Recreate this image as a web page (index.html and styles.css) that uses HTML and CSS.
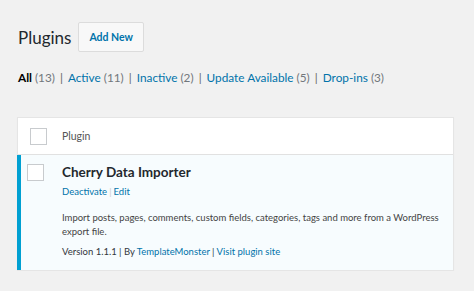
FILE: index.html
```html
<!DOCTYPE html>
<html lang="en">
<head>
    <meta charset="UTF-8">
    <title>Plugins</title>
    <link rel="stylesheet" href="styles.css">
</head>
<body>
    <div class="wrap">
        <div class="page-head">
            <h1>Plugins</h1>
            <a class="add-new" href="#">Add New</a>
        </div>

        <ul class="subsubsub">
            <li><a class="current" href="#">All <span class="count">(13)</span></a><span class="sep">|</span></li>
            <li><a href="#">Active <span class="count">(11)</span></a><span class="sep">|</span></li>
            <li><a href="#">Inactive <span class="count">(2)</span></a><span class="sep">|</span></li>
            <li><a href="#">Update Available <span class="count">(5)</span></a><span class="sep">|</span></li>
            <li><a href="#">Drop-ins <span class="count">(3)</span></a></li>
        </ul>

        <div class="plugins">
            <div class="head-row">
                <span class="check"></span>
                <span class="col-name">Plugin</span>
            </div>
            <div class="plugin-row active">
                <span class="check"></span>
                <div class="plugin-info">
                    <strong class="plugin-title">Cherry Data Importer</strong>
                    <div class="row-actions">
                        <a href="#">Deactivate</a><span class="bar">|</span><a href="#">Edit</a>
                    </div>
                    <p class="desc">Import posts, pages, comments, custom fields, categories, tags and more from a WordPress export file.</p>
                    <div class="meta">Version 1.1.1 | By <a href="#">TemplateMonster</a> | <a href="#">Visit plugin site</a></div>
                </div>
            </div>
        </div>
    </div>
</body>
</html>
```

FILE: styles.css
```css
body {
    margin: 0;
    background-color: #f1f1f1;
    font-family: Lato, "Open Sans", sans-serif;
    color: #32373c;
    font-size: 10px;
}
a {
    color: #0073aa;
    text-decoration: none;
}
.wrap {
    padding: 22px 20px 0 17px;
}
.page-head {
    display: flex;
    align-items: center;
    gap: 7px;
    padding-left: 1px;
}
h1 {
    margin: 0;
    font-size: 17px;
    font-weight: 400;
    color: #23282d;
}
.add-new {
    display: inline-block;
    height: 28px;
    line-height: 28px;
    padding: 0 10px;
    border: 1px solid #dcdcdc;
    background-color: #f8f8f8;
    font-size: 10.5px;
    font-weight: 700;
    border-radius: 2px;
}
.subsubsub {
    list-style: none;
    margin: 18px 0 0;
    padding: 0 0 0 1px;
    display: flex;
    font-size: 11.8px;
    line-height: 15px;
    color: #555;
}
.subsubsub .sep {
    margin: 0 5px;
    color: #666;
}
.subsubsub a.current {
    color: #000;
    font-weight: 700;
}
.count {
    color: #72777c;
    font-weight: 400;
}
.plugins {
    margin-top: 32px;
    background-color: #fff;
    border: 1px solid #e5e5e5;
    box-shadow: 0 1px 1px rgba(0, 0, 0, 0.04);
}
.head-row {
    display: flex;
    align-items: center;
    height: 36px;
    border-bottom: 1px solid #e1e1e1;
}
.check {
    width: 15px;
    height: 15px;
    border: 1px solid #c8cbce;
    background-color: #fff;
    flex-shrink: 0;
}
.head-row .check {
    margin-left: 12px;
}
.col-name {
    margin-left: 15px;
    color: #555;
    font-size: 10.5px;
}
.plugin-row {
    display: flex;
    align-items: flex-start;
    padding: 9px 0 11px;
    background-color: #f7fcfe;
    border-left: 4px solid #00a0d2;
    margin-left: -1px;
}
.plugin-row .check {
    margin-left: 6px;
}
.plugin-info {
    margin-left: 18px;
    padding-right: 5px;
}
.plugin-title {
    display: block;
    font-size: 13.5px;
    font-weight: 700;
    color: #23282d;
    line-height: 17px;
}
.row-actions {
    margin-top: 4px;
    font-size: 9.5px;
    line-height: 14px;
}
.bar {
    color: #ccc;
    margin: 0 2px;
}
.desc {
    margin: 12px 0 0;
    line-height: 14px;
    font-size: 9.5px;
    color: #444;
}
.meta {
    margin-top: 6px;
    line-height: 14px;
    font-size: 9.5px;
    color: #32373c;
}
```
